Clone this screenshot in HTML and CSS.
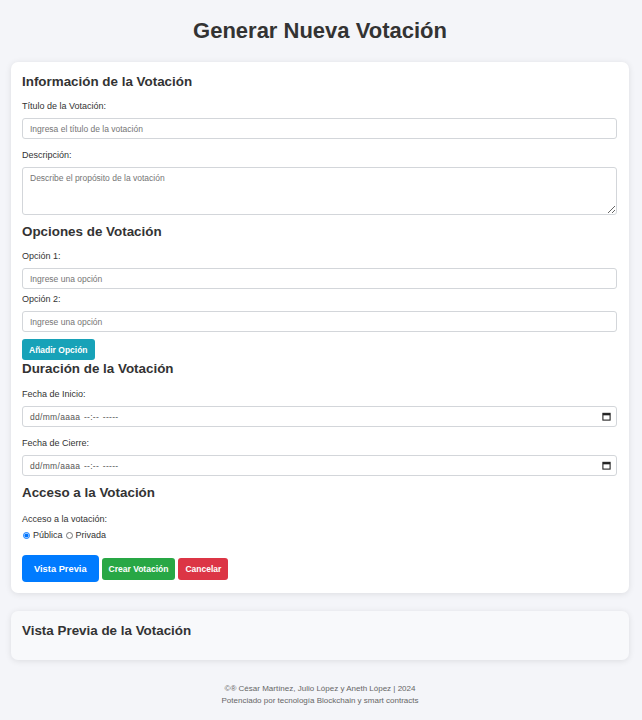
FILE: index.html
```html
<!DOCTYPE html>
<html lang="es">
<head>
<meta charset="utf-8">
<title>Generar Nueva Votación</title>
<link rel="stylesheet" href="styles.css">
</head>
<body>
<main class="page">
  <h1 class="page-title">Generar Nueva Votación</h1>

  <section class="card form-card">
    <h2 class="section-title">Información de la Votación</h2>
    <div class="group">
      <label class="label">Título de la Votación:</label>
      <input class="field" type="text" placeholder="Ingresa el título de la votación">
    </div>
    <div class="group group-last">
      <label class="label">Descripción:</label>
      <textarea class="field area" placeholder="Describe el propósito de la votación"></textarea>
    </div>

    <h2 class="section-title">Opciones de Votación</h2>
    <div class="group group-option">
      <label class="label">Opción 1:</label>
      <input class="field" type="text" placeholder="Ingrese una opción">
    </div>
    <div class="group group-option2">
      <label class="label">Opción 2:</label>
      <input class="field" type="text" placeholder="Ingrese una opción">
    </div>
    <button class="btn btn-info" type="button">Añadir Opción</button>

    <h2 class="section-title title-dates">Duración de la Votación</h2>
    <div class="group">
      <label class="label">Fecha de Inicio:</label>
      <div class="field date-field">
        <span class="date-text">dd/mm/aaaa --:-- -----</span>
        <svg class="cal" viewBox="0 0 10 10" width="9" height="9"><rect x="1" y="1.5" width="8" height="7.5" fill="none" stroke="#222" stroke-width="1.2"/><rect x="1" y="1.5" width="8" height="2.2" fill="#222"/></svg>
      </div>
    </div>
    <div class="group group-last">
      <label class="label">Fecha de Cierre:</label>
      <div class="field date-field">
        <span class="date-text">dd/mm/aaaa --:-- -----</span>
        <svg class="cal" viewBox="0 0 10 10" width="9" height="9"><rect x="1" y="1.5" width="8" height="7.5" fill="none" stroke="#222" stroke-width="1.2"/><rect x="1" y="1.5" width="8" height="2.2" fill="#222"/></svg>
      </div>
    </div>

    <h2 class="section-title title-access">Acceso a la Votación</h2>
    <div class="group group-access">
      <label class="label">Acceso a la votación:</label>
      <div class="radios">
        <label class="radio"><input type="radio" name="acceso" checked>Pública</label>
        <label class="radio"><input type="radio" name="acceso">Privada</label>
      </div>
    </div>

    <div class="actions">
      <button class="btn btn-primary" type="button">Vista Previa</button>
      <button class="btn btn-success" type="button">Crear Votación</button>
      <button class="btn btn-danger" type="button">Cancelar</button>
    </div>
  </section>

  <section class="card preview-card">
    <h2 class="section-title">Vista Previa de la Votación</h2>
  </section>

  <footer class="footer">
    <p>©® César Martínez, Julio López y Aneth López | 2024</p>
    <p>Potenciado por tecnología Blockchain y smart contracts</p>
  </footer>
</main>
</body>
</html>
```

FILE: styles.css
```css
* { box-sizing: border-box; }
html, body { margin: 0; padding: 0; }
body {
  background: #f4f5f9;
  font-family: "Liberation Sans", Arial, sans-serif;
  color: #333;
}
.page {
  padding: 17px 13px 0 11px;
  min-height: 720px;
}
.page-title {
  margin: 0 0 17px;
  text-align: center;
  font-size: 22px;
  line-height: 28px;
  font-weight: bold;
  color: #333;
}
.card {
  background: #fff;
  border-radius: 7px;
  box-shadow: 0 1px 6px rgba(0,0,0,0.10);
  padding: 11px 12px 11px 11px;
}
.section-title {
  margin: 0 0 11px;
  font-size: 13.4px;
  line-height: 17px;
  font-weight: bold;
  color: #333;
}
.group { margin-bottom: 11px; }
.group-last { margin-bottom: 8px; }
.group-option { margin-bottom: 5px; }
.group-option2 { margin-bottom: 7px; }
.group-access { margin-bottom: 0; }
.label {
  display: block;
  font-size: 9px;
  line-height: 11px;
  color: #333;
  margin-bottom: 6px;
}
.field {
  display: block;
  width: 100%;
  height: 21px;
  border: 1px solid #d3d6da;
  border-radius: 3px;
  background: #fff;
  padding: 0 7px;
  font-family: "Liberation Sans", Arial, sans-serif;
  font-size: 8.5px;
  color: #333;
  outline: none;
}
.field::placeholder { color: #757575; }
.area {
  height: 48px;
  padding: 5px 7px;
  resize: vertical;
}
.title-dates { margin-bottom: 12px; }
.date-field {
  display: flex;
  align-items: center;
  justify-content: space-between;
  padding: 0 5px 0 7px;
}
.date-text { color: #555; font-size: 8.5px; letter-spacing: 0.3px; word-spacing: 1px; }
.cal { display: block; }
.title-access { margin-bottom: 13px; }
.radios {
  display: flex;
  align-items: center;
  gap: 2px;
  font-size: 9px;
  line-height: 11px;
  margin-top: -1px;
}
.radio {
  display: inline-flex;
  align-items: center;
}
.radio input {
  width: 7px;
  height: 7px;
  margin: 0 3px 0 1px;
}
.btn {
  border: none;
  border-radius: 3px;
  color: #fff;
  font-family: "Liberation Sans", Arial, sans-serif;
  font-weight: bold;
  font-size: 8.5px;
  height: 21px;
  padding: 0 7px;
  cursor: pointer;
}
.btn-info { background: #17a2b8; display: block; }
.btn-primary {
  background: #007bff;
  height: 27px;
  font-size: 9.3px;
  padding: 0 12px;
  border-radius: 4px;
}
.btn-success { background: #28a745; height: 22px; }
.btn-danger { background: #dc3545; height: 22px; }
.actions {
  display: flex;
  align-items: center;
  gap: 3px;
  margin-top: 14px;
}
.preview-card {
  margin-top: 18px;
  background: #f8f9fb;
  padding: 11px 12px 21px 11px;
}
.preview-card .section-title { margin: 0; }
.footer {
  margin-top: 23px;
  text-align: center;
  font-size: 8px;
  line-height: 12px;
  color: #666;
}
.footer p { margin: 0; }
```
